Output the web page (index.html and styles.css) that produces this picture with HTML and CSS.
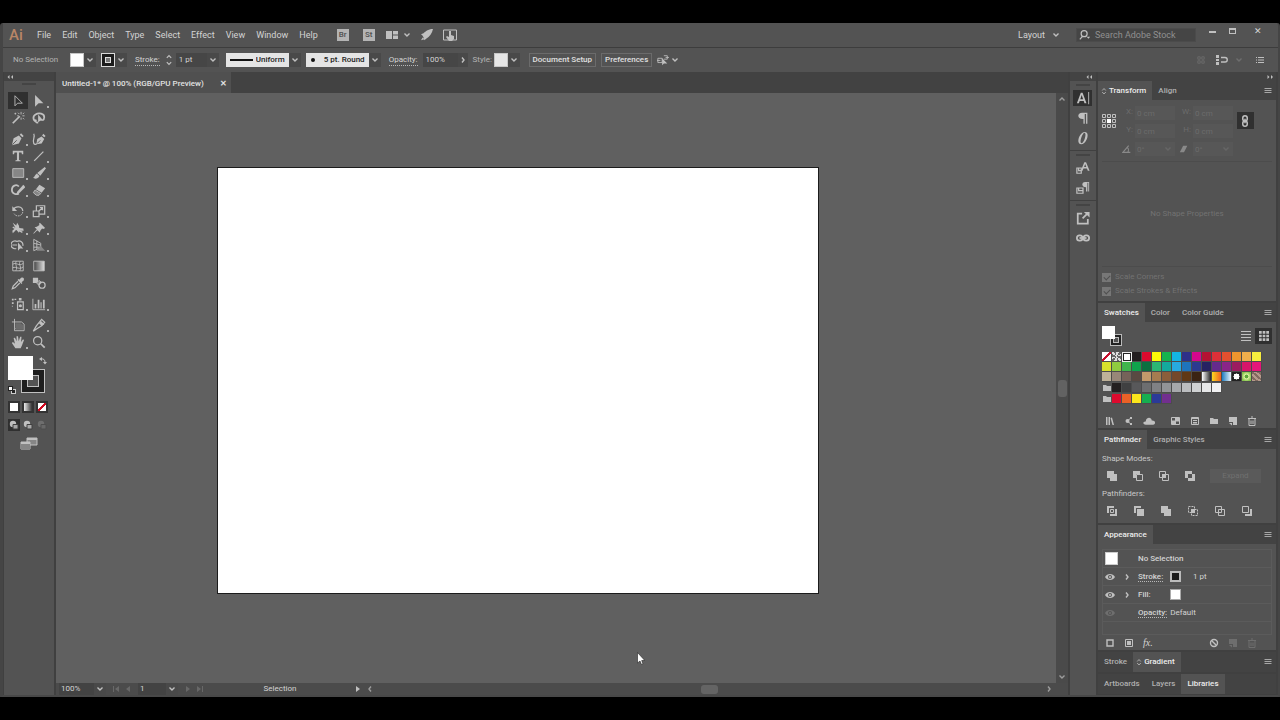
FILE: index.html
```html
<!DOCTYPE html>
<html lang="en">
<head>
    <meta charset="utf-8">
    <title>Untitled-1</title>
    <link rel="stylesheet" href="styles.css">
</head>
<body>
    <!-- icon set -->
    <svg class="sprite" aria-hidden="true">
        <symbol id="down" viewBox="0 0 8 8"><path d="M1.500 2.500 4 5 6.500 2.500" class="line thick"/></symbol>
        <symbol id="up" viewBox="0 0 8 8"><path d="M1.500 5.500 4 3 6.500 5.500" class="line thick"/></symbol>
        <symbol id="right" viewBox="0 0 8 8"><path d="M3 1.500 5 4 3 6.500" class="line thick"/></symbol>
        <symbol id="left" viewBox="0 0 8 8"><path d="M5 1.500 3 4 5 6.500" class="line thick"/></symbol>
        <symbol id="menu" viewBox="0 0 8 8"><path d="M.5 1.500H7.500M.5 3.500H7.500M.5 5.500H7.500" class="line"/></symbol>
        <symbol id="collapse" viewBox="0 0 8 8"><path d="M3.500 2V6L1.500 4ZM7 2V6L5 4Z"/></symbol>
        <symbol id="expand" viewBox="0 0 8 8"><path d="M1.500 2V6L3.500 4ZM5 2V6L7 4Z"/></symbol>
        <symbol id="updown" viewBox="0 0 8 8"><path d="M2.200 3.500 4 1.500 5.800 3.500M2.200 5 4 7 5.800 5" class="line"/></symbol>
        <symbol id="select" viewBox="0 0 16 16"><path d="M4.500 2V13.500L7.500 10.500H13Z" class="line"/></symbol>
        <symbol id="direct" viewBox="0 0 16 16"><path d="M3.500 1V14.500L7.500 10.500H13Z"/></symbol>
        <symbol id="wand" viewBox="0 0 16 16"><path d="M2 14 10 6" class="line heavy"/><path d="M11.500 1V4M11.500 7.500V10M7 5.500H9M13 5.500H15.500M8 2 9.500 3.500M13.500 8 15 9.500M15 2 13.500 3.500M5 2V4M4 3H6" class="line"/></symbol>
        <symbol id="lasso" viewBox="0 0 16 16"><path d="M5 12C1 11 .5 6 4 4 8 1.500 14 3 14 7 14 9 13 10 12 10.500M5 10C3.500 11 4 14 7 13" class="line heavy"/><path d="M7 4V13L9.300 11H13Z"/></symbol>
        <symbol id="pen" viewBox="0 0 16 16"><path d="M1 15 3 7 9 4 12 7 9 13ZM10 3 11.500 1.500 14.500 4.500 13 6Z"/><path d="M1.500 14.500 6.500 9.500" class="cut"/></symbol>
        <symbol id="curve" viewBox="0 0 16 16"><path d="M5 14 6 8 11 5 14 8 11 13ZM11.500 4 13 2 15.500 4.500 14 6Z"/><path d="M2 2C4 6 0 9 2 13 3 15 5 14 6 13" class="line thick"/><path d="M6 13 9.500 9.500" class="cut"/></symbol>
        <symbol id="type" viewBox="0 0 16 16"><path d="M2 2H14V6H12.500L12 4H9.200V12.500L11 13V14H5V13L6.800 12.500V4H4L3.500 6H2Z"/></symbol>
        <symbol id="segment" viewBox="0 0 16 16"><path d="M2.500 13.500 13 3" class="line thick"/></symbol>
        <symbol id="rect" viewBox="0 0 16 16"><path d="M2 3H14.500V13H2Z" class="soft"/><path d="M2 3H14.500V13H2Z" class="line"/></symbol>
        <symbol id="brush" viewBox="0 0 16 16"><path d="M14.500 1 16 2.500 9.500 11 6 8ZM5.500 8.500 8.500 11.500C7 15 3 15 1 13.500 3 13 3 10 5.500 8.500Z"/></symbol>
        <symbol id="shaper" viewBox="0 0 16 16"><path d="M9 4C6 1 1 3 1 8 1 12 6 14 9 12" class="line heavy"/><path d="M14 2 16.500 4.500 9 12 6 13 7 10Z"/></symbol>
        <symbol id="eraser" viewBox="0 0 16 16"><path d="M8.500 2 15 6 11 11 4.500 7Z"/><path d="M3.500 8 10 12 8 14H5L1.500 11Z" class="soft"/><path d="M3.500 8 10 12 8 14H5L1.500 11Z" class="line"/></symbol>
        <symbol id="rotate" viewBox="0 0 16 16"><path d="M3 6C5 2 13 2 13.500 8" class="line thick"/><path d="M13.500 9C13 14 6 15.500 3.500 11" class="line dots"/><path d="M1.500 2.500V8H7Z"/></symbol>
        <symbol id="scale" viewBox="0 0 16 16"><path d="M1.500 8H8V14.500H1.500ZM5 8V2H14.500V11.500H8M8 8 12 4M9 4H12V7" class="line thick"/></symbol>
        <symbol id="width" viewBox="0 0 16 16"><path d="M2 2 6 5 7 2 9 5 9.500 8 14 8.500 14.500 11 10 11 9 13.500 6 10 2 14 1.500 11 5 8Z"/><path d="M2 7 13 13" class="line thick"/></symbol>
        <symbol id="pin" viewBox="0 0 16 16"><path d="M9 2 15 8 13 9 11.500 8.500 9.500 11 9 13 6 10.500 2 14.500 1.500 14 5.500 9.500 3 7 5.500 6.500 8.500 4.500 8 3Z"/></symbol>
        <symbol id="build" viewBox="0 0 16 16"><path d="M6 12A4.500 4.500 0 1 1 7 4M7 4A4.500 4.500 0 0 1 13.500 9M1.500 8H7" class="line thick"/><path d="M8 5V14.500L10.300 12H14Z"/></symbol>
        <symbol id="persp" viewBox="0 0 16 16"><path d="M2 1.500V14.500L10 11V6ZM5.500 3V13M2 6 10 8M2 10.500H10" class="line"/><path d="M10 9 15 14.500H5Z" class="soft"/></symbol>
        <symbol id="mesh" viewBox="0 0 16 16"><path d="M2 2.500H14V13.500H2ZM2 6C6 3 9 9 14 5M2 10C6 8 9 13 14 9M6 2.500C4 6 8 9 5.500 13.500M10.500 2.500C8 7 13 9 10 13.500" class="line"/></symbol>
        <linearGradient id="fade"><stop offset="0" stop-color="#444"/><stop offset="1" stop-color="#ddd"/></linearGradient>
        <symbol id="gradient" viewBox="0 0 16 16"><path d="M2 2.500H14V13.500H2Z" fill="url(#fade)"/><path d="M2 2.500H14V13.500H2Z" class="line"/></symbol>
        <symbol id="dropper" viewBox="0 0 16 16"><path d="M10 4C12 0 16 2 14.500 5L12 7 13 8 12 9 7.500 4.500 8.500 3.500Z"/><path d="M8 6 2.500 11.500 1.500 14.500 4.500 13.500 10 8" class="line thick"/></symbol>
        <symbol id="blend" viewBox="0 0 16 16"><path d="M1 2H7V8H1Z"/><path d="M8 5 11 7.500 8 10.500 5 8Z" class="soft"/><path d="M8 5 11 7.500 8 10.500 5 8Z" class="line"/><circle cx="11.500" cy="10.500" r="3.500" class="line thick"/></symbol>
        <symbol id="spray" viewBox="0 0 16 16"><path d="M1 2H3V4H1ZM4 2H6V3.500H4ZM1 6H3V8H1ZM1 10H2V11H1ZM9 1H12V4H9Z"/><path d="M7.500 5.500H14V14.500H7.500Z" class="line thick"/><circle cx="10.700" cy="10" r="1.800"/></symbol>
        <symbol id="graph" viewBox="0 0 16 16"><path d="M1 2V14.500H15" class="line"/><path d="M3 8H5V13H3ZM6.500 3H8.500V13H6.500ZM9.700 6H11V13H9.700ZM12.500 3H14.500V13H12.500Z"/></symbol>
        <symbol id="board" viewBox="0 0 16 16"><path d="M4 1V12H7M1 4.500H12L15 7V14.500H4V12" class="line"/><path d="M5 6H11L14 8V13.500H5Z" class="dim-fill"/></symbol>
        <symbol id="slice" viewBox="0 0 16 16"><path d="M11 1.500 14.500 5 11 9 6 12 1.500 15 5 9Z" class="line thick"/><path d="M10 3 14 7 11 9 8 6Z"/></symbol>
        <symbol id="hand" viewBox="0 0 16 16"><path d="M5 15 1 9 2.200 8 4.500 10 3 3.500 4.500 3 6.500 7 6.300 1.500H8L8.800 7 10.500 2H12L11.500 8 13.500 5 15 5.500 12.500 12 11 15Z"/></symbol>
        <symbol id="zoom" viewBox="0 0 16 16"><circle cx="6.500" cy="6.500" r="4.700" class="line thick"/><path d="M10 10 14.500 14.500" class="line heavy"/></symbol>
        <symbol id="swap" viewBox="0 0 16 16"><path d="M4 4C10 3 12 6 12 11" class="line heavy"/><path d="M6 0V8L0 4ZM8 10H16L12 15Z"/></symbol>
        <symbol id="screen" viewBox="0 0 18 14"><path d="M7 1H17V8H7Z" class="soft"/><path d="M7 1H17V8H7ZM1 5H10V12H1Z" class="line"/><path d="M1 5H10V12H1Z" class="soft"/><path d="M7 1H17V3H7ZM1 5H10V7H1Z"/></symbol>
        <symbol id="mode" viewBox="0 0 10 10"><circle cx="4" cy="4" r="3.200"/><path d="M4 4.500H9V9H4Z" class="cutbox"/></symbol>
        <symbol id="chars" viewBox="0 0 16 16"><path d="M1 14 5.500 2H7.500L12 14H9.700L8.800 11.300H4.200L3.300 14ZM4.900 9.300H8.100L6.500 4.700ZM14 1H15V15H14Z"/></symbol>
        <symbol id="para" viewBox="0 0 16 16"><path d="M13 2V14.500H11.500V3.500H10V14.500H8.500V9C1 9.500 1 2 7 2Z"/></symbol>
        <symbol id="oval" viewBox="0 0 16 16"><path fill-rule="evenodd" d="M10 1C14 1 14 6 12 10 10 14 8 15 6 15 2 15 2 10 4 6 6 2 8 1 10 1ZM9.500 2C7.500 2 3 14 6.500 14 9 14 13 2 9.500 2Z"/></symbol>
        <symbol id="cstyle" viewBox="0 0 16 16"><path d="M5.500 11 9.500 1.500H11.500L15.500 11H13.500L12.500 8.500H8.500L7.500 11ZM9.200 6.800H11.800L10.500 3.500Z"/><path d="M1 8H6V14H1ZM3 8V11H6" class="line thick"/></symbol>
        <symbol id="pstyle" viewBox="0 0 16 16"><path d="M15 1V12H14V2H13V12H11.500V7C6 7 6 1 10.500 1Z"/><path d="M1 8H8V14H1ZM3 8V11H8" class="line thick"/></symbol>
        <symbol id="export" viewBox="0 0 16 16"><path d="M7 3H2V14.500H13.500V9M7.500 8.500 13 3" class="line heavy"/><path d="M9 1H15.500V7.500Z"/></symbol>
        <symbol id="links" viewBox="0 0 16 16"><rect x="1" y="5" width="6.500" height="6" rx="3" class="line heavy"/><rect x="8.500" y="5" width="6.500" height="6" rx="3" class="line heavy"/><path d="M4 8H12" class="line heavy"/></symbol>
        <symbol id="chain" viewBox="0 0 16 16"><rect x="5" y="1" width="6" height="7" rx="3" class="line heavy"/><rect x="5" y="8" width="6" height="7" rx="3" class="line heavy"/><path d="M8 5V11" class="line heavy"/></symbol>
        <symbol id="ref" viewBox="0 0 14 14"><path d="M.5.500H3.500V3.500H.5ZM5.500.500H8.500V3.500H5.500ZM10.500.500H13.500V3.500H10.500ZM.5 5.500H3.500V8.500H.5ZM10.500 5.500H13.500V8.500H10.500ZM.5 10.500H3.500V13.500H.5ZM5.500 10.500H8.500V13.500H5.500ZM10.500 10.500H13.500V13.500H10.500Z" class="line"/><path d="M5 5H9V9H5Z" fill="#fff"/></symbol>
        <symbol id="panes" viewBox="0 0 12 10"><path d="M0 1H6V9H0ZM7 1H12V4.500H7ZM7 5.500H12V9H7Z"/></symbol>
        <symbol id="rocket" viewBox="0 0 14 14"><path d="M14 0C8 0 5 3 3 5L0 6 2 8 3 10 4 13 6 11.500C10 9 13 5 14 0ZM2 10 0 13 4 12Z"/></symbol>
        <symbol id="touch" viewBox="0 0 14 12"><path d="M.5 1H13.500V11H.5Z" class="line"/><path d="M6 2H8V6L11 7V10L9 12H6L3 8 4 7 6 8Z"/></symbol>
        <symbol id="search" viewBox="0 0 14 12"><circle cx="6" cy="4.500" r="3.500" class="line thick"/><path d="M4 7.500 1 11" class="line thick"/><path d="M9 8H13L11 10.500Z"/></symbol>
        <symbol id="isolate" viewBox="0 0 14 12"><path d="M1 4H6V9H1ZM8 1H12V5H8M0 6.500H4M10 3H14" class="line"/><path d="M6 4V12L8 10H12Z"/></symbol>
        <symbol id="dots" viewBox="0 0 10 10"><path d="M1 1H4V4H1ZM6 1H9V4H6ZM1 6H4V9H1ZM6 6H9V9H6Z" class="line"/></symbol>
        <symbol id="snap" viewBox="0 0 12 10"><path d="M0 0H3V3H0ZM0 4H3V6H0ZM0 7H3V10H0Z"/><path d="M5 2.500H9C12 2.500 12 7 9 7H5" class="line thick"/></symbol>
        <symbol id="list" viewBox="0 0 10 10"><path d="M1 2.500H2M3 2.500H9M1 5H2M3 5H9M1 7.500H2M3 7.500H9" class="line"/></symbol>
        <symbol id="rows" viewBox="0 0 10 10"><path d="M0 .5H10M0 3.500H10M0 6.500H10M0 9.500H10" class="line"/></symbol>
        <symbol id="tiles" viewBox="0 0 11 11"><path d="M0 0H3V3H0ZM4 0H7V3H4ZM8 0H11V3H8ZM0 4H3V7H0ZM4 4H7V7H4ZM8 4H11V7H8ZM0 8H3V11H0ZM4 8H7V11H4ZM8 8H11V11H8Z"/></symbol>
        <symbol id="folder" viewBox="0 0 10 10"><path d="M1 2H4L5 3H9V8H1Z"/></symbol>
        <symbol id="library" viewBox="0 0 10 10"><path d="M1 1H2.500V9H1ZM3.500 1H5V9H3.500ZM5.500 2 7 1.500 9 9H7.500Z"/></symbol>
        <symbol id="share" viewBox="0 0 10 10"><path d="M7 2 3 5 7 8" class="line"/><circle cx="3.500" cy="5" r="2"/><path d="M6 1H8V3H6ZM6 7H8V9H6Z"/></symbol>
        <symbol id="cloud" viewBox="0 0 13 10"><path d="M3 9C-1 9 0 5 3 5.500 3 1 9 0 9.500 4.500 14 4 14 9 11 9Z"/></symbol>
        <symbol id="kinds" viewBox="0 0 10 10"><path d="M.5 1.500H8.500V8.500H.5ZM.5 5H8.500M4.500 1.500V8.500" class="line"/><path d="M5 2H8V5H5ZM1 5H4V8H1Z"/></symbol>
        <symbol id="options" viewBox="0 0 10 10"><path d="M1.500 1.500H8.500V8.500H1.500ZM1.500 2.500H8.500" class="line"/><path d="M3 4H7V5H3ZM3 6H7V7.500H3Z"/></symbol>
        <symbol id="newitem" viewBox="0 0 10 10"><path d="M1 1H9V9H5V6H1Z"/><path d="M1 7H4V9.500Z"/></symbol>
        <symbol id="trash" viewBox="0 0 10 10"><path d="M2 2.500H8V9.500H2ZM1 2.500H9M4 1H6M4 4.500V8M6 4.500V8" class="line"/></symbol>
        <symbol id="unite" viewBox="0 0 12 12"><path d="M1 1H8V4H11V11H4V8H1Z"/></symbol>
        <symbol id="minus" viewBox="0 0 12 12"><path d="M1 1H8V4H4V8H1Z"/><path d="M4.500 4.500H10.500V10.500H4.500Z" class="line"/></symbol>
        <symbol id="intersect" viewBox="0 0 12 12"><path d="M1.500 1.500H7.500V7.500H1.500ZM4.500 4.500H10.500V10.500H4.500Z" class="line"/><path d="M4 4H8V8H4Z"/></symbol>
        <symbol id="exclude" viewBox="0 0 12 12"><path fill-rule="evenodd" d="M1 1H8V4H11V11H4V8H1ZM4 4V8H8V4Z"/></symbol>
        <symbol id="divide" viewBox="0 0 12 12"><path d="M1 1H8V3H3V8H1ZM9 4H11V11H4V9H9Z"/><path d="M4.500 4.500H7.500V7.500H4.500Z" class="line"/></symbol>
        <symbol id="trim" viewBox="0 0 12 12"><path d="M1 1H8V3H3V8H1ZM4 4H11V11H4Z"/></symbol>
        <symbol id="crop" viewBox="0 0 12 12"><path d="M1.500 1.500H7.500V7.500H1.500ZM4.500 4.500H10.500V10.500H4.500Z" class="line dots"/><path d="M4 4H8V8H4Z"/></symbol>
        <symbol id="outline" viewBox="0 0 12 12"><path d="M1.500 1.500H7.500V7.500H1.500ZM4.500 4.500H10.500V10.500H4.500Z" class="line"/></symbol>
        <symbol id="back" viewBox="0 0 12 12"><path d="M1.500 1.500H7.500V7.500H1.500Z" class="line"/><path d="M9 4H11V11H4V9H9Z"/></symbol>
        <symbol id="eye" viewBox="0 0 10 10"><path fill-rule="evenodd" d="M0 5C2 1 8 1 10 5 8 9 2 9 0 5ZM5 3A2 2 0 1 0 5 7 2 2 0 1 0 5 3Z"/><circle cx="5" cy="5" r="1"/></symbol>
        <symbol id="box" viewBox="0 0 10 10"><path d="M2 2H8V8H2Z" class="line thick"/></symbol>
        <symbol id="filled" viewBox="0 0 10 10"><path d="M1.500 1.500H8.500V8.500H1.500Z" class="line"/><path d="M3 3H7V7H3Z"/></symbol>
        <symbol id="none" viewBox="0 0 10 10"><circle cx="5" cy="5" r="3.500" class="line thick"/><path d="M2.500 2.500 7.500 7.500" class="line thick"/></symbol>
        <symbol id="first" viewBox="0 0 8 8"><path d="M1 1H2V7H1ZM7 1V7L3 4Z"/></symbol>
        <symbol id="prev" viewBox="0 0 8 8"><path d="M6 1V7L2 4Z"/></symbol>
        <symbol id="next" viewBox="0 0 8 8"><path d="M2 1V7L6 4Z"/></symbol>
        <symbol id="last" viewBox="0 0 8 8"><path d="M6 1H7V7H6ZM1 1V7L5 4Z"/></symbol>
        <symbol id="angle" viewBox="0 0 12 10"><path d="M10 9H1L8 1M6 3C8 4 8 7 7 9" class="line thick"/></symbol>
        <symbol id="shear" viewBox="0 0 12 10"><path d="M5 1H10L6 9H1Z"/></symbol>
    </svg>

    <div class="app">
        <header class="menubar">
            <span class="logo">Ai</span>
            <nav class="menus">
                <a href="#">File</a>
                <a href="#">Edit</a>
                <a href="#">Object</a>
                <a href="#">Type</a>
                <a href="#">Select</a>
                <a href="#">Effect</a>
                <a href="#">View</a>
                <a href="#">Window</a>
                <a href="#">Help</a>
            </nav>
            <div class="launchers">
                <button class="app-tile">Br</button>
                <button class="app-tile">St</button>
                <button class="arrange" aria-label="Arrange documents"><svg class="i12"><use href="#panes"/></svg><svg class="i8"><use href="#down"/></svg></button>
                <button class="near" aria-label="GPU performance"><svg class="i12"><use href="#rocket"/></svg></button>
                <button class="near" aria-label="Touch workspace"><svg class="i14"><use href="#touch"/></svg></button>
            </div>
            <button class="workspace-btn">Layout <svg class="i8"><use href="#down"/></svg></button>
            <label class="stock"><svg class="i12"><use href="#search"/></svg><input type="text" aria-label="Search Adobe Stock" placeholder="Search Adobe Stock"></label>
            <div class="window-btns">
                <button aria-label="Minimize"><span class="win-min"></span></button>
                <button aria-label="Maximize"><span class="win-max"></span></button>
                <button aria-label="Close" class="win-close">✕</button>
            </div>
        </header>

        <section class="controls">
            <span class="state">No Selection</span>
            <div class="picker"><button class="chip white" aria-label="Fill"></button><button class="arrow" aria-label="Fill options"><svg class="i8"><use href="#down"/></svg></button></div>
            <div class="picker"><button class="chip stroke" aria-label="Stroke colour"></button><button class="arrow" aria-label="Stroke options"><svg class="i8"><use href="#down"/></svg></button></div>
            <label for="weight" class="dotted">Stroke:</label>
            <div class="weight">
                <span class="stepper"><svg class="i8"><use href="#up"/></svg><svg class="i8"><use href="#down"/></svg></span>
                <input id="weight" type="text" value="1 pt">
                <button class="arrow" aria-label="Weights"><svg class="i8"><use href="#down"/></svg></button>
            </div>
            <div class="picker"><span class="profile"><i class="rule"></i><select aria-label="Width profile"><option>Uniform</option></select></span><span class="arrow"><svg class="i8"><use href="#down"/></svg></span></div>
            <div class="picker"><span class="profile"><i class="dot"></i><select aria-label="Brush"><option>5 pt. Round</option></select></span><span class="arrow"><svg class="i8"><use href="#down"/></svg></span></div>
            <label for="opacity" class="dotted">Opacity:</label>
            <div class="weight opacity"><input id="opacity" type="text" value="100%"><button class="arrow" aria-label="Opacity slider"><svg class="i8"><use href="#right"/></svg></button></div>
            <span class="dim">Style:</span>
            <div class="picker"><button class="chip pale" aria-label="Graphic style"></button><button class="arrow" aria-label="Styles"><svg class="i8"><use href="#down"/></svg></button></div>
            <button class="push setup">Document Setup</button>
            <button class="push">Preferences</button>
            <button class="similar" aria-label="Select similar"><svg class="i12"><use href="#isolate"/></svg><svg class="i8"><use href="#down"/></svg></button>
            <div class="controls-end">
                <svg class="i8 off"><use href="#dots"/></svg>
                <svg class="i12"><use href="#snap"/></svg>
                <svg class="i8 off"><use href="#down"/></svg>
                <svg class="i10"><use href="#list"/></svg>
            </div>
        </section>

        <main class="workspace">
            <aside class="tools">
                <button class="fold" aria-label="Collapse tools"><svg class="i8"><use href="#collapse"/></svg></button>
                <div class="toolbox">
                    <span class="grip"></span>
                    <div class="tool-groups" id="tools"></div>
                    <div class="colors">
                        <span class="big-stroke"></span>
                        <span class="big-fill"></span>
                        <svg class="i8 swap"><use href="#swap"/></svg>
                        <span class="mini reset"><i></i><b></b></span>
                    </div>
                    <div class="modes">
                        <button class="mode-solid" aria-label="Color"></button>
                        <button class="mode-grad" aria-label="Gradient"></button>
                        <button class="mode-none" aria-label="None"></button>
                    </div>
                    <div class="modes draw">
                        <button class="on" aria-label="Draw normal"><svg class="i10"><use href="#mode"/></svg></button>
                        <button aria-label="Draw behind"><svg class="i10"><use href="#mode"/></svg></button>
                        <button class="off" aria-label="Draw inside"><svg class="i10"><use href="#mode"/></svg></button>
                    </div>
                    <button class="screen" aria-label="Screen mode"><svg><use href="#screen"/></svg></button>
                </div>
            </aside>

            <section class="document">
                <div class="tabs-bar">
                    <div class="doc-tab"><a href="#">Untitled-1* @ 100% (RGB/GPU Preview)</a><button aria-label="Close document">✕</button></div>
                </div>
                <div class="doc-body">
                    <div class="canvas">
                        <div class="artboard"></div>
                        <svg class="cursor" viewBox="0 0 8 13"><path d="M.5.500V11L3 9 4.500 12.500 6 12 4.700 8.500H7.800Z" fill="#fff" stroke="#222" stroke-width=".6"/></svg>
                    </div>
                    <div class="vscroll"><svg class="i8"><use href="#up"/></svg><i></i><svg class="i8"><use href="#down"/></svg></div>
                </div>
                <footer class="status">
                    <input class="zoom-level" type="text" value="100%" aria-label="Zoom level"><span class="arrow"><svg class="i8"><use href="#down"/></svg></span>
                    <span class="jump off"><svg class="i8"><use href="#first"/></svg><svg class="i8"><use href="#prev"/></svg></span>
                    <input class="board-no" type="text" value="1" aria-label="Artboard"><span class="arrow"><svg class="i8"><use href="#down"/></svg></span>
                    <span class="jump off"><svg class="i8"><use href="#next"/></svg><svg class="i8"><use href="#last"/></svg></span>
                    <span class="current">Selection</span>
                    <svg class="i8"><use href="#next"/></svg>
                    <div class="hscroll"><svg class="i8"><use href="#left"/></svg><i></i><svg class="i8"><use href="#right"/></svg></div>
                </footer>
            </section>

            <aside class="dock">
                <button class="fold" aria-label="Expand dock"><svg class="i8"><use href="#collapse"/></svg></button>
                <div class="dock-group"><span class="grip"></span>
                    <button class="on" aria-label="Character"><svg class="i14"><use href="#chars"/></svg></button>
                    <button aria-label="Paragraph"><svg class="i14"><use href="#para"/></svg></button>
                    <button aria-label="OpenType"><svg class="i14"><use href="#oval"/></svg></button>
                </div>
                <div class="dock-group"><span class="grip"></span>
                    <button aria-label="Character styles"><svg class="i14"><use href="#cstyle"/></svg></button>
                    <button aria-label="Paragraph styles"><svg class="i14"><use href="#pstyle"/></svg></button>
                </div>
                <div class="dock-group rest"><span class="grip"></span>
                    <button aria-label="Asset export"><svg class="i14"><use href="#export"/></svg></button>
                    <button aria-label="Links"><svg class="i14"><use href="#links"/></svg></button>
                </div>
            </aside>

            <aside class="panels">
                <button class="fold" aria-label="Collapse panels"><svg class="i8"><use href="#expand"/></svg></button>

                <section class="panel grow">
                    <div class="tabs"><a href="#" class="active"><svg class="i8"><use href="#updown"/></svg>Transform</a><a href="#">Align</a><svg class="i8 more"><use href="#menu"/></svg></div>
                    <div class="transform">
                        <div class="fields">
                            <svg class="ref"><use href="#ref"/></svg>
                            <div class="field-grid">
                                <label for="fx">X:</label><input id="fx" type="text" value="0 cm" disabled>
                                <label for="fw">W:</label><input id="fw" type="text" value="0 cm" disabled>
                                <label for="fy">Y:</label><input id="fy" type="text" value="0 cm" disabled>
                                <label for="fh">H:</label><input id="fh" type="text" value="0 cm" disabled>
                                <label for="fa" aria-label="Rotate"><svg class="i10"><use href="#angle"/></svg></label><span class="deg"><input id="fa" type="text" value="0°" disabled><svg class="i8"><use href="#down"/></svg></span>
                                <label for="fs" aria-label="Shear"><svg class="i10"><use href="#shear"/></svg></label><span class="deg"><input id="fs" type="text" value="0°" disabled><svg class="i8"><use href="#down"/></svg></span>
                            </div>
                            <button class="chain" aria-label="Constrain proportions"><svg class="i12"><use href="#chain"/></svg></button>
                        </div>
                        <p class="noshape">No Shape Properties</p>
                        <div class="scales">
                            <label><input type="checkbox" checked disabled>Scale Corners</label>
                            <label><input type="checkbox" checked disabled>Scale Strokes &amp; Effects</label>
                        </div>
                    </div>
                </section>

                <section class="panel">
                    <div class="tabs"><a href="#" class="active">Swatches</a><a href="#">Color</a><a href="#">Color Guide</a><svg class="i8 more"><use href="#menu"/></svg></div>
                    <div class="swatches">
                        <div class="swatch-head">
                            <span class="pair"><b></b><i></i></span>
                            <button aria-label="List view"><svg class="i10"><use href="#rows"/></svg></button>
                            <button class="on" aria-label="Thumbnail view"><svg class="i10"><use href="#tiles"/></svg></button>
                        </div>
                        <div id="swatches"></div>
                        <div class="icon-row swatch-foot">
                            <svg class="i10"><use href="#library"/></svg><svg class="i10"><use href="#share"/></svg><svg class="i12"><use href="#cloud"/></svg>
                            <svg class="i10 apart"><use href="#kinds"/></svg><svg class="i10"><use href="#options"/></svg><svg class="i10"><use href="#folder"/></svg><svg class="i10"><use href="#newitem"/></svg><svg class="i10"><use href="#trash"/></svg>
                        </div>
                    </div>
                </section>

                <section class="panel">
                    <div class="tabs"><a href="#" class="active">Pathfinder</a><a href="#">Graphic Styles</a><svg class="i8 more"><use href="#menu"/></svg></div>
                    <div class="pathfinder">
                        <p>Shape Modes:</p>
                        <div class="ops shapes">
                            <button aria-label="Unite"><svg class="i12"><use href="#unite"/></svg></button>
                            <button aria-label="Minus front"><svg class="i12"><use href="#minus"/></svg></button>
                            <button aria-label="Intersect"><svg class="i12"><use href="#intersect"/></svg></button>
                            <button aria-label="Exclude"><svg class="i12"><use href="#exclude"/></svg></button>
                            <button class="expand" disabled>Expand</button>
                        </div>
                        <p>Pathfinders:</p>
                        <div class="ops">
                            <button aria-label="Divide"><svg class="i12"><use href="#divide"/></svg></button>
                            <button aria-label="Trim"><svg class="i12"><use href="#trim"/></svg></button>
                            <button aria-label="Merge"><svg class="i12"><use href="#unite"/></svg></button>
                            <button aria-label="Crop"><svg class="i12"><use href="#crop"/></svg></button>
                            <button aria-label="Outline"><svg class="i12"><use href="#outline"/></svg></button>
                            <button aria-label="Minus back"><svg class="i12"><use href="#back"/></svg></button>
                        </div>
                    </div>
                </section>

                <section class="panel">
                    <div class="tabs"><a href="#" class="active">Appearance</a><svg class="i8 more"><use href="#menu"/></svg></div>
                    <div class="appearance">
                        <div class="attrs">
                            <div class="attr head"><span class="thumb"></span><strong>No Selection</strong></div>
                            <div class="attr"><svg class="i10 eye"><use href="#eye"/></svg><svg class="i8 open"><use href="#right"/></svg><span class="name"><a href="#" class="dotted">Stroke:</a></span><i class="well dark"></i><span>1 pt</span></div>
                            <div class="attr"><svg class="i10 eye"><use href="#eye"/></svg><svg class="i8 open"><use href="#right"/></svg><span class="name"><a href="#">Fill:</a></span><i class="well"></i></div>
                            <div class="attr"><svg class="i10 eye off"><use href="#eye"/></svg><span class="i8 open"></span><span class="name"><a href="#" class="dotted">Opacity:</a></span><span>Default</span></div>
                        </div>
                        <div class="icon-row attr-foot">
                            <svg class="i10"><use href="#box"/></svg><svg class="i10"><use href="#filled"/></svg><em>fx.</em>
                            <svg class="i10 apart"><use href="#none"/></svg><svg class="i10 off"><use href="#newitem"/></svg><svg class="i10 off"><use href="#trash"/></svg>
                        </div>
                    </div>
                </section>

                <section class="panel">
                    <div class="tabs tall"><a href="#">Stroke</a><a href="#" class="active"><svg class="i8"><use href="#updown"/></svg>Gradient</a><svg class="i8 more"><use href="#menu"/></svg></div>
                </section>
                <section class="panel">
                    <div class="tabs tall"><a href="#">Artboards</a><a href="#">Layers</a><a href="#" class="active">Libraries</a></div>
                </section>
            </aside>
        </main>
    </div>

    <script>
        // tools by group, two to a row; a star marks a flyout
        const groups = [
            ["select", "direct*", "wand", "lasso"],
            ["pen*", "curve", "type*", "segment*", "rect*", "brush*", "shaper*", "eraser*"],
            ["rotate*", "scale*", "width*", "pin*", "build*", "persp*"],
            ["mesh", "gradient", "dropper*", "blend"],
            ["spray*", "graph*"],
            ["board", "slice*", "hand*", "zoom"]
        ];
        document.getElementById("tools").innerHTML = groups.map(group =>
            `<div class="tool-group">${group.map(item => {
                const name = item.replace("*", "");
                const cls = (name === "select" ? "on " : "") + (item.endsWith("*") ? "flyout" : "");
                return `<button class="tool ${cls}" aria-label="${name}"><svg class="i14"><use href="#${name}"/></svg></button>`;
            }).join("")}</div>`).join("");

        const swatches = [
            ["none", "registration", "chosen", "#231f20", "#dd0a2e", "#fdf808", "#15b24e", "#14b5e4", "#2e3089", "#d4078d", "#b41232", "#dd3038", "#e4502f", "#ee952e", "#f0ae4c", "#f8ee3e"],
            ["#d8e02c", "#8fcb3f", "#40b54c", "#10a34c", "#0c7040", "#2cb673", "#14a99c", "#28aae0", "#1f74bc", "#2c3a90", "#262262", "#652a8c", "#8a2588", "#9c1c60", "#d8156a", "#e4167a"],
            ["#bfb299", "#988778", "#756359", "#594a42", "#c2996b", "#a67c50", "#8a5e3b", "#74482a", "#603815", "#3b2313", "grad-grey", "grad-sun", "grad-sky", "spot", "leaf", "bark"],
            ["folder", "#231f20", "#404041", "#58585a", "#6d6e70", "#808184", "#929497", "#a6a8ab", "#bbbdbf", "#d0d2d3", "#e6e7e8", "#f1f1f2"],
            ["folder", "#dd0a2e", "#ea6127", "#fbe61c", "#16ae50", "#2b3a98", "#722f8f"]
        ];
        document.getElementById("swatches").innerHTML = swatches.map(row =>
            `<div class="swatch-row">${row.map(c => {
                if (c[0] === "#") return `<i style="background:${c}"></i>`;
                if (c === "folder") return `<svg class="i10"><use href="#folder"/></svg>`;
                return `<i class="sw-${c}"></i>`;
            }).join("")}</div>`).join("");
    </script>
</body>
</html>
```

FILE: styles.css
```css
* {
    margin: 0;
    padding: 0;
    box-sizing: border-box;
}

body {
    background: #000;
    color: #d4d4d4;
    font-family: Roboto, "Open Sans", sans-serif;
    font-size: 8px;
    line-height: 12px;
    overflow: hidden;
}

button, input, select {
    font: inherit;
    color: inherit;
    background: none;
    border: none;
    outline: none;
}

a {
    color: inherit;
    text-decoration: none;
}

svg {
    display: block;
    flex: none;
    fill: #c0c0c0;
    stroke: none;
}

.sprite { position: absolute; width: 0; height: 0; }
.line { fill: none; stroke: #c0c0c0; stroke-width: 1; }
.thick { stroke-width: 1.4; }
.heavy { stroke-width: 2; }
.dots { stroke-dasharray: 2 1; }
.soft { fill: #868686; }
.dim-fill { fill: #6c6c6c; }
.cut { fill: none; stroke: #535353; stroke-width: 1; }
.cutbox { fill: #a8a8a8; stroke: #404040; }

.i8 { width: 8px; height: 8px; }
.i10 { width: 10px; height: 10px; }
.i12 { width: 12px; height: 12px; }
.i14 { width: 14px; height: 14px; }
.off { opacity: 0.25; }

.app {
    display: flex;
    flex-direction: column;
    height: calc(100vh - 46px);
    margin: 23px 0;
    background: #535353;
    border-left: 3px solid #454545;
    border-right: 2px solid #454545;
    border-bottom: 2px solid #484848;
    border-radius: 3px 3px 0 0;
}

/* menu bar */
.menubar {
    display: flex;
    align-items: center;
    height: 25px;
    padding-left: 6px;
    border-bottom: 1px solid #3d3d3d;
    font-size: 9px;
}

.logo {
    width: 28px;
    color: #b98667;
    font-size: 15px;
    font-weight: 500;
}

.menus { display: flex; gap: 11px; }

.launchers {
    display: flex;
    align-items: center;
    gap: 14px;
    margin-left: 19px;
}

.app-tile {
    width: 12px;
    height: 12px;
    background: #b4b4b4;
    color: #505050;
    font-size: 8px;
    font-weight: 500;
}

.launchers .arrange {
    display: flex;
    align-items: center;
    gap: 5px;
    margin-left: -3px;
}

.launchers .near { margin-left: -4px; }

.workspace-btn {
    display: flex;
    align-items: center;
    gap: 7px;
    margin-left: auto;
    padding-right: 16px;
}

.stock {
    display: flex;
    align-items: center;
    gap: 4px;
    width: 120px;
    height: 14px;
    padding-left: 2px;
    background: #454545;
    border: 1px solid #4b4b4b;
}

.stock input { width: 100px; }
.stock input::placeholder { color: #909090; }

.window-btns {
    display: flex;
    align-items: center;
    gap: 6px;
    height: 16px;
    margin: 0 13px 9px 9px;
}

.window-btns button {
    display: flex;
    justify-content: center;
    width: 14px;
}

.window-btns .win-close { margin-left: 6px; font-size: 9px; }
.win-min { width: 7px; height: 2px; margin-top: 3px; background: #c0c0c0; }
.win-max { width: 7px; height: 6px; border: 1px solid #c0c0c0; border-top-width: 2px; }

/* control bar */
.controls {
    display: flex;
    align-items: center;
    gap: 5px;
    height: 24px;
    padding-left: 10px;
}

.state { width: 52px; color: #b4b4b4; }
.dim { color: #b4b4b4; width: 16px; }

.dotted { border-bottom: 1px dotted #b8b8b8; line-height: 10px; }
.controls .dotted { margin-left: 3px; }

.picker, .weight { display: flex; align-items: center; }

.chip { width: 14px; height: 14px; border: 1px solid #c6c6c6; }
.white { background: #fff; }
.pale { background: #e6e6e6; }
.stroke {
    background: #777;
    border: 1px solid #dadada;
    box-shadow: inset 0 0 0 3px #1c1c1c, inset 0 0 0 4px #ddd;
}

.arrow {
    display: flex;
    align-items: center;
    justify-content: center;
    width: 12px;
    height: 14px;
    background: #494949;
}

.weight { background: #464646; height: 14px; margin-right: 2px; }
.weight input { width: 31px; padding-left: 3px; }
.opacity { margin-right: 0; }
.opacity input { width: 35px; }
.opacity .arrow { width: 10px; }
.stepper { width: 11px; background: #535353; }
.stepper svg { height: 7px; }

.profile {
    display: flex;
    align-items: center;
    justify-content: space-between;
    width: 63px;
    height: 14px;
    padding: 0 4px;
    background: #e4e4e4;
    color: #222;
}

.profile select { appearance: none; font-weight: 500; }
.rule { width: 23px; height: 2px; background: #111; }
.dot { width: 4px; height: 4px; margin-left: 1px; border-radius: 50%; background: #111; }

.push {
    height: 14px;
    padding: 0 3px;
    border: 1px solid #6b6b6b;
    color: #e0e0e0;
    font-weight: 500;
    line-height: 12px;
}

.setup { margin-left: 4px; }
.similar { display: flex; align-items: center; gap: 2px; }

.controls-end {
    display: flex;
    align-items: center;
    gap: 7px;
    margin-left: auto;
    padding-right: 13px;
}

.controls-end .i12 { margin-left: 4px; }
.controls-end .i10 { margin-left: 5px; }

/* workspace */
.workspace {
    display: flex;
    flex: 1;
    min-height: 0;
    background: #404040;
}

.fold {
    display: flex;
    align-items: center;
    width: 100%;
    height: 9px;
    padding: 0 2px;
    background: #434343;
}

.grip {
    display: block;
    width: 14px;
    height: 2px;
    margin: 2px auto;
    background: #444;
}

.tools { display: flex; flex-direction: column; width: 53px; padding: 0 2px 0 1px; }
.toolbox { flex: 1; padding: 0 4px; background: #535353; }
.toolbox .grip { margin-bottom: 7px; }
.tool-groups { display: grid; gap: 4px; }

.tool-group {
    display: grid;
    grid-template-columns: 20px 20px;
    grid-auto-rows: 17px;
    column-gap: 1px;
}

.tool {
    display: flex;
    position: relative;
    align-items: center;
    justify-content: center;
}

.on { background: #303030; }

.flyout::after {
    content: "";
    position: absolute;
    right: 0;
    bottom: 1px;
    width: 2px;
    height: 2px;
    background: #b0b0b0;
}

/* overlapping fill and stroke wells */
.colors { position: relative; height: 38px; margin: 6px 0 7px; }
.big-fill, .big-stroke, .swap, .reset { position: absolute; }
.big-fill { left: 0; top: 0; width: 25px; height: 24px; background: #fff; }
.big-stroke {
    left: 13px;
    top: 13px;
    width: 24px;
    height: 24px;
    background: #535353;
    border: 1px solid #c0c0c0;
    box-shadow: inset 0 0 0 5px #1e1e1e, inset 0 0 0 6px #c0c0c0;
}
.swap { left: 31px; top: 1px; }
.reset { left: 0; top: 30px; width: 8px; height: 8px; }
.reset i, .reset b { position: absolute; width: 5px; height: 5px; }
.reset i { right: 0; bottom: 0; border: 1px solid #ccc; background: #222; }
.reset b { background: #fff; border: 1px solid #222; }

.modes { display: flex; gap: 2px; }
.modes button {
    display: flex;
    align-items: center;
    justify-content: center;
    width: 12px;
    height: 12px;
    border: 2px solid #333;
}
.modes .mode-solid { background: #fff; }
.modes .mode-grad { background: linear-gradient(90deg, #eee, #333); }
.modes .mode-none { background: linear-gradient(135deg, #fff 38%, #d00a20 38% 62%, #fff 62%); }
.draw { margin: 6px 0; }
.modes.draw button { border: none; }

.screen { display: block; margin: 0 auto; width: 18px; }
.screen svg { width: 18px; height: 14px; }

.document { display: flex; flex: 1; flex-direction: column; min-width: 0; background: #4b4b4b; }
.tabs-bar { display: flex; height: 21px; background: #424242; }

.doc-tab {
    display: flex;
    align-items: center;
    gap: 16px;
    padding: 2px 4px 0 6px;
    background: #505050;
    color: #e2e2e2;
    font-weight: 500;
}

.doc-tab button { font-size: 8px; font-weight: 700; }
.doc-body { display: flex; flex: 1; min-height: 0; }

.canvas {
    position: relative;
    flex: 1;
    background: #606060;
    overflow: hidden;
}

.artboard {
    position: absolute;
    left: 161px;
    top: 74px;
    width: 602px;
    height: 427px;
    background: #fff;
    border: 1px solid #1c1c1c;
}

.cursor { position: absolute; left: 581px; top: 559px; width: 8px; height: 13px; }

.vscroll {
    display: flex;
    flex-direction: column;
    align-items: center;
    justify-content: space-between;
    width: 12px;
    padding: 2px 0;
    background: #4a4a4a;
}

.vscroll i { width: 9px; height: 17px; border-radius: 3px; background: #626262; }
.vscroll svg, .hscroll svg { opacity: 0.7; }

.status {
    display: flex;
    align-items: center;
    height: 12px;
    padding: 0 15px 0 3px;
    background: #4b4b4b;
}

.status input { height: 12px; padding-left: 2px; background: #434343; }
.zoom-level { width: 35px; }
.board-no { width: 28px; }
.status .arrow { height: 12px; }
.jump { display: flex; justify-content: center; gap: 4px; width: 32px; }
.current { width: 144px; padding-right: 4px; text-align: center; }

.hscroll {
    display: flex;
    flex: 1;
    align-items: center;
    justify-content: space-between;
    margin-left: 4px;
}

.hscroll i { width: 17px; height: 9px; border-radius: 3px; background: #646464; }

/* icon dock */
.dock { display: flex; flex-direction: column; width: 29px; padding: 0 1px 0 2px; background: #404040; }
.dock .fold { justify-content: center; padding-left: 14px; }
.dock-group { padding: 2px 3px 4px; margin-bottom: 1px; background: #535353; }
.dock-group.rest { flex: 1; margin: 0; }
.dock-group button {
    display: flex;
    align-items: center;
    justify-content: center;
    width: 19px;
    height: 16px;
    margin-top: 4px;
}
.dock-group .grip { margin-top: 1px; }

/* panels */
.panels { display: flex; flex-direction: column; width: 181px; padding: 0 2px 1px 1px; }
.panels .fold { justify-content: flex-end; }
.panel { margin-bottom: 2px; background: #535353; }
.panel:last-child { margin: 0; }
.panel.grow { display: flex; flex: 1; flex-direction: column; }

.tabs {
    display: flex;
    align-items: stretch;
    height: 19px;
    background: #434343;
    color: #b0b0b0;
    line-height: 19px;
    font-weight: 500;
}

.tabs a { display: flex; align-items: center; padding: 0 6px; }
.tabs .active { background: #535353; color: #ececec; }
.tabs a svg { margin: 0 1px 0 -4px; opacity: 0.8; }
.more { margin: auto 4px auto auto; opacity: 0.8; }
.tall { height: 20px; line-height: 20px; }

.transform { display: flex; flex: 1; flex-direction: column; padding: 6px 4px 3px; }
.fields {
    display: flex;
    align-items: flex-start;
    gap: 4px;
    padding-bottom: 5px;
    border-bottom: 1px solid #4c4c4c;
}
.ref { width: 14px; height: 14px; margin-top: 8px; }
.field-grid {
    display: grid;
    grid-template-columns: 13px 40px 14px 40px;
    grid-auto-rows: 14px;
    gap: 4px 2px;
    color: #6c6c6c;
}
.field-grid label { text-align: right; }
.field-grid label svg { margin: 2px 0 0 2px; opacity: 0.5; }
.field-grid input { width: 100%; height: 14px; padding-left: 2px; background: #575757; }
.deg { position: relative; }
.deg svg { position: absolute; right: 3px; top: 3px; opacity: 0.15; }
.chain { width: 17px; height: 17px; margin-top: 6px; padding: 2px; background: #303030; }

.noshape { margin: auto; color: #727272; }
.scales { padding-top: 3px; border-top: 1px solid #4c4c4c; color: #727272; }
.scales label { display: flex; align-items: center; gap: 4px; height: 14px; }
.scales input {
    appearance: none;
    width: 9px;
    height: 9px;
    background: #777;
}
.scales input::after {
    content: "";
    display: block;
    width: 5px;
    height: 3px;
    margin: 2px;
    border: solid #505050;
    border-width: 0 0 1px 1px;
    transform: rotate(-45deg);
}

.swatches { padding: 4px 4px 0; }
.swatch-head { display: flex; align-items: center; height: 20px; margin-bottom: 6px; }
.swatch-head button {
    display: flex;
    align-items: center;
    justify-content: center;
    width: 17px;
    height: 16px;
    margin-left: 1px;
}
.pair { position: relative; width: 20px; height: 20px; margin-right: auto; }
.pair b, .pair i { position: absolute; }
.pair b { z-index: 1; left: 0; top: 0; width: 13px; height: 13px; background: #fff; }
.pair i {
    left: 8px;
    top: 8px;
    width: 12px;
    height: 12px;
    border: 1px solid #bbb;
    background: #535353;
    box-shadow: inset 0 0 0 2px #222, inset 0 0 0 3px #bbb;
}

.swatch-row { display: flex; height: 10px; }
.swatch-row i { width: 10px; height: 10px; border: solid #4c4c4c; border-width: 0 1px 1px 0; }
.swatch-row:nth-child(n+4) { margin-top: 1px; }
.swatch-row .sw-none { background: linear-gradient(135deg, #fff 42%, #c8102e 42% 58%, #fff 58%); }
.swatch-row .sw-registration { background: repeating-conic-gradient(#ddd 0 30deg, #666 30deg 60deg); }
.swatch-row .sw-chosen { background: #fff; border: 1px solid #eee; box-shadow: inset 0 0 0 1px #222; }
.sw-grad-grey { background: linear-gradient(90deg, #fff, #222); }
.sw-grad-sun { background: linear-gradient(90deg, #fcd820, #f06020); }
.sw-grad-sky { background: linear-gradient(90deg, #1f7cc0, #e8f4fa); }
.sw-spot { background: radial-gradient(#fff 45%, #222 50%); }
.sw-leaf { background: radial-gradient(#5da53a 25%, #d7ef9c 35%, #86c34d 75%); }
.sw-bark { background: repeating-linear-gradient(40deg, #b69a8c 0 2px, #826a60 2px 4px); }

.icon-row { display: flex; align-items: center; gap: 9px; }
.apart { margin-left: auto; }
.swatch-foot { height: 14px; margin-top: 10px; padding: 0 15px 0 3px; }

.pathfinder { padding: 4px 4px 0; height: 74px; }
.pathfinder p { color: #c8c8c8; }
.ops { display: flex; align-items: center; gap: 15px; height: 16px; margin: 3px 0 4px; padding-left: 4px; }
.shapes { gap: 14px; }
.expand { width: 51px; height: 14px; background: #5a5a5a; color: #707070; }

.appearance { padding: 5px 4px 0; }
.attrs { height: 86px; border: 1px solid #5b5b5b; }
.attr { display: flex; align-items: center; height: 18px; border-bottom: 1px solid #5b5b5b; }
.attr.head strong { margin-left: 20px; font-weight: 500; }
.thumb { width: 13px; height: 13px; margin-left: 2px; background: #fff; border: 1px solid #ccc; }
.eye { margin: 0 5px 0 2px; }
.open { margin: 0 7px 0 3px; }
.name { min-width: 26px; margin-right: 3px; font-weight: 500; }
.well { width: 11px; height: 11px; margin: 0 12px 0 3px; background: #fff; border: 1px solid #aaa; }
.dark { background: #1a1a1a; border: 2px solid #bbb; }
.attr-foot { height: 15px; padding: 0 15px 0 3px; }
.attr-foot em { font-family: "Liberation Serif", serif; font-size: 10px; }
```
